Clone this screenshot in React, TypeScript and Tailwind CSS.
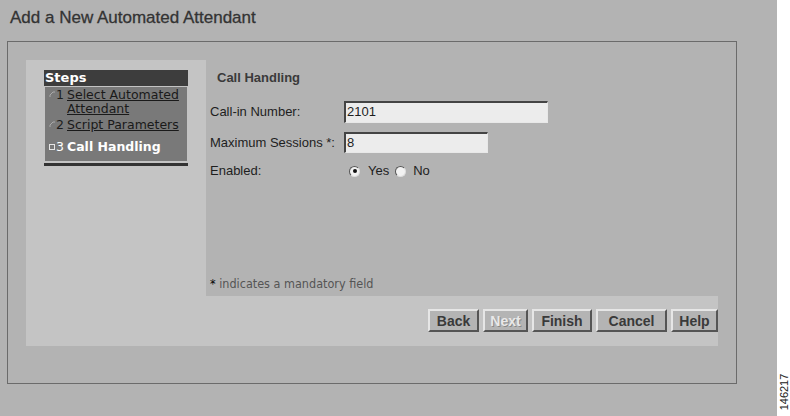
import React from 'react';

const steps = [
  { n: 1, label: ['Select Automated', 'Attendant'], done: true },
  { n: 2, label: ['Script Parameters'], done: true },
  { n: 3, label: ['Call Handling'], done: false },
];

const buttons = [
  { label: 'Back', w: 'w-[51px]', disabled: false },
  { label: 'Next', w: 'w-[45px]', disabled: true },
  { label: 'Finish', w: 'w-[60px]', disabled: false },
  { label: 'Cancel', w: 'w-[71px]', disabled: false },
  { label: 'Help', w: 'w-[47px]', disabled: false },
];

const Pencil = () => (
  <svg width="7" height="7" viewBox="0 0 7 7" className="mt-[3px]">
    <path d="M1 6 L1 4 L4 1 L6 1" stroke="#aaaaaa" strokeWidth="1" fill="none" />
  </svg>
);

const Radio = ({ checked }: { checked: boolean }) => (
  <span className="w-[11px] h-[11px] rounded-full border border-t-[#555] border-l-[#555] border-r-[#ddd] border-b-[#ddd] bg-[#f2f2f2] flex items-center justify-center">
    {checked && <span className="w-[4px] h-[4px] rounded-full bg-[#111]" />}
  </span>
);

const App = () => {
  return (
    <div className="w-[790px] h-[416px] flex font-['Liberation_Sans',Arial,sans-serif] overflow-hidden">
      <div className="w-[777px] h-full bg-[#b3b3b3] flex flex-col">
        <div className="h-[41px] pl-[10px] pt-[7px] text-[17px] leading-[22px] text-[#333333] [-webkit-text-stroke:0.3px_#333333]">
          Add a New Automated Attendant
        </div>
        <div className="ml-[7px] w-[730px] h-[343px] border border-[#6b6b6b] pt-[18px] pl-[18px]">
          <div className="w-[692px] h-[286px] bg-[#c4c4c4] flex">
            <div className="w-[180px] pl-[18px] pt-[10px]">
              <div className="w-[144px] font-['DejaVu_Sans',Verdana,sans-serif]">
                <div className="h-[16px] bg-[#3d3d3d] text-white font-bold text-[13px] leading-[16px] pl-[1px]">Steps</div>
                <div className="mx-[1px] mt-[1px] h-[74px] bg-[#797979] pt-[1px]">
                  {steps.map((s) => (
                    <div key={s.n} className={`flex pl-[3px] ${s.n === 3 ? 'mt-[8px] items-center' : ''} ${s.n === 2 ? 'mt-[2px]' : ''}`}>
                      <span className="w-[8px] flex justify-center">
                        {s.done ? (
                          <Pencil />
                        ) : (
                          <span className="w-[6px] h-[6px] border border-[#e6e6e6]" />
                        )}
                      </span>
                      <span className={`text-[12.5px] leading-[14px] w-[11px] ${s.done ? 'text-[#1e1e1e]' : 'text-white'}`}>{s.n}</span>
                      {s.done ? (
                        <span className="text-[12.5px] leading-[14px] text-[#1a1a1a] underline">
                          {s.label.map((l) => (
                            <div key={l}>{l}</div>
                          ))}
                        </span>
                      ) : (
                        <span className="text-[12.5px] leading-[14px] text-white font-bold">{s.label[0]}</span>
                      )}
                    </div>
                  ))}
                </div>
                <div className="mt-[2px] h-[3px] bg-[#333333]" />
              </div>
            </div>
            <div className="flex-1 flex flex-col">
              <div className="h-[236px] bg-[#b3b3b3] pl-[4px] flex flex-col text-[13px] text-[#1e1e1e]">
                <div className="pl-[7px] pt-[10px] h-[41px] font-bold text-[#3a3a3a] leading-[16px]">Call Handling</div>
                <div className="flex items-center h-[22px]">
                  <span className="w-[134px]">Call-in Number:</span>
                  <div className="w-[204px] h-[22px] bg-[#ececec] border border-t-[#444] border-l-[#444] border-r-[#e8e8e8] border-b-[#e8e8e8] border-t-2 border-l-2 pl-[1px] leading-[18px]">2101</div>
                </div>
                <div className="flex items-center h-[21px] mt-[9px]">
                  <span className="w-[134px]">Maximum Sessions *:</span>
                  <div className="w-[144px] h-[21px] bg-[#ececec] border border-t-[#444] border-l-[#444] border-r-[#e8e8e8] border-b-[#e8e8e8] border-t-2 border-l-2 pl-[1px] leading-[17px]">8</div>
                </div>
                <div className="flex items-center h-[16px] mt-[10px]">
                  <span className="w-[134px]">Enabled:</span>
                  <span className="ml-[5px]"><Radio checked /></span>
                  <span className="ml-[8px]">Yes</span>
                  <span className="ml-[6px]"><Radio checked={false} /></span>
                  <span className="ml-[7px]">No</span>
                </div>
                <div className="mt-auto mb-[5px] text-[12.5px] text-[#555] font-['DejaVu_Sans_Condensed','DejaVu_Sans',sans-serif] leading-[14px]">
                  <span className="text-black">*</span> indicates a mandatory field
                </div>
              </div>
              <div className="flex-1 flex justify-end items-start pt-[13px] gap-[4px]">
                {buttons.map((b) => (
                  <button
                    key={b.label}
                    className={`${b.w} h-[23px] bg-[#b4b4b4] border-2 border-t-[#e6e6e6] border-l-[#e6e6e6] border-r-[#555] border-b-[#555] text-[14px] font-bold leading-[18px] ${b.disabled ? 'text-[#e8e8e8] [text-shadow:1px_1px_0_#888]' : 'text-[#3a3a3a]'}`}
                  >
                    {b.label}
                  </button>
                ))}
              </div>
            </div>
          </div>
        </div>
      </div>
      <div className="w-[13px] h-full bg-white relative">
        <span className="absolute left-[-12px] top-[386px] -rotate-90 text-[11px] leading-[12px] text-[#222] w-[38px] text-center">146217</span>
      </div>
    </div>
  );
};

export default App;
